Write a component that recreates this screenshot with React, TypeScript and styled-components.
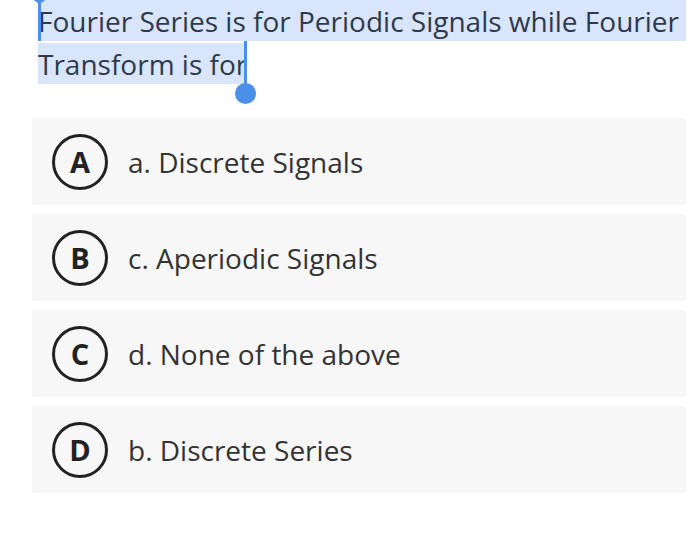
import { createGlobalStyle, styled } from 'styled-components';

const GlobalStyle = createGlobalStyle`
  html, body {
    margin: 0;
    padding: 0;
    background: #ffffff;
  }
  body {
    font-family: 'Open Sans', 'Noto Sans', sans-serif;
  }
`;

const options = [
  { letter: 'A', text: 'a. Discrete Signals' },
  { letter: 'B', text: 'c. Aperiodic Signals' },
  { letter: 'C', text: 'd. None of the above' },
  { letter: 'D', text: 'b. Discrete Series' },
];

export default function App() {
  return (
    <>
      <GlobalStyle />
      <Page>
        <Question>
          <Selected>
            Fourier Series is for Periodic Signals while Fourier&nbsp;
            <br />
            Transform is for
          </Selected>
          <EndHandle />
          <StartHandle />
        </Question>
        <OptionList>
          {options.map((o) => (
            <Option key={o.letter}>
              <Badge>{o.letter}</Badge>
              <OptionText>{o.text}</OptionText>
            </Option>
          ))}
        </OptionList>
      </Page>
    </>
  );
}

const Page = styled.div`
  padding: 0 14px 0 32px;
`;

const Question = styled.div`
  position: relative;
  margin-left: 6px;
  font-size: 28px;
  line-height: 43px;
  white-space: nowrap;
  color: #2e3a4b;
`;

const Selected = styled.span`
  background: #d8e5fb;
  padding: 2px 0 1px;
  -webkit-box-decoration-break: clone;
  box-decoration-break: clone;
`;

const StartHandle = styled.span`
  position: absolute;
  left: 0;
  top: 0;
  width: 3px;
  height: 41px;
  background: #4a8fe8;
  &::before {
    content: '';
    position: absolute;
    left: -5px;
    top: -10px;
    width: 13px;
    height: 13px;
    border-radius: 50%;
    background: #4a8fe8;
  }
`;

/* zero-width anchor sitting on the baseline right after the selection */
const EndHandle = styled.span`
  display: inline-block;
  position: relative;
  width: 0;
  height: 0;
  &::before {
    content: '';
    position: absolute;
    left: -3px;
    bottom: -16px;
    width: 3px;
    height: 50px;
    background: #4a8fe8;
  }
  &::after {
    content: '';
    position: absolute;
    left: -12px;
    top: 8px;
    width: 21px;
    height: 21px;
    border-radius: 50%;
    background: #4a8fe8;
  }
`;

const OptionList = styled.div`
  margin-top: 32px;
  display: flex;
  flex-direction: column;
  gap: 9px;
`;

const Option = styled.div`
  display: flex;
  align-items: center;
  gap: 20px;
  height: 87px;
  padding-left: 20px;
  background: #f7f7f7;
  border-radius: 3px;
`;

const Badge = styled.div`
  box-sizing: border-box;
  width: 56px;
  height: 56px;
  border: 3.5px solid #222;
  border-radius: 50%;
  display: flex;
  align-items: center;
  justify-content: center;
  font-size: 29px;
  font-weight: 700;
  color: #222;
`;

const OptionText = styled.span`
  font-size: 28px;
  color: #333;
`;
